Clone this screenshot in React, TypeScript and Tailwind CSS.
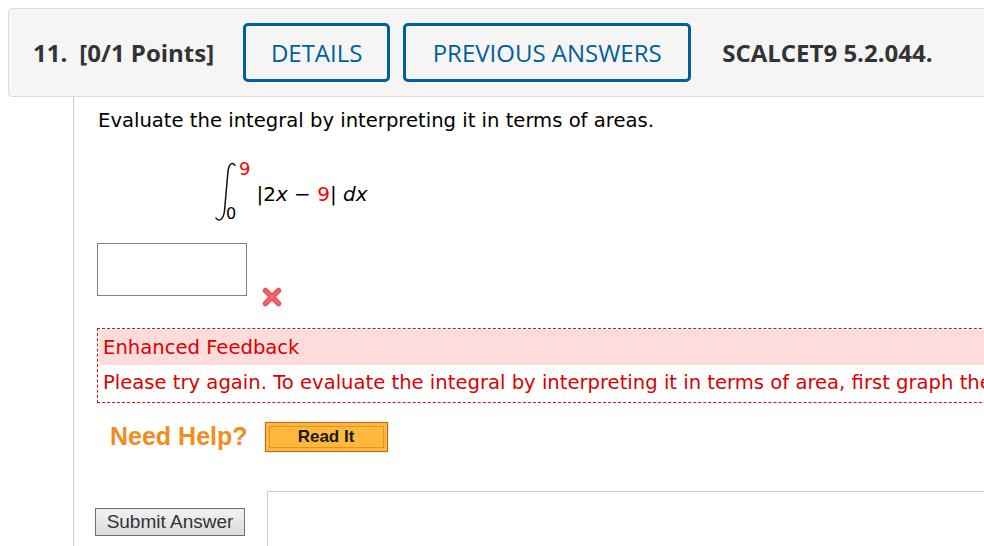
import React from 'react';

const headerFont = { fontFamily: '"Open Sans", "Liberation Sans", sans-serif' };
const verdana = { fontFamily: '"DejaVu Sans", Verdana, sans-serif' };
const arial = { fontFamily: '"Liberation Sans", Arial, sans-serif' };

const IntegralSign: React.FC = () => (
  <svg width="26" height="60" viewBox="0 0 26 60" className="shrink-0">
    <path
      d="M24 3.5 Q22.5 0.8 20.5 1.6 Q18 2.6 17 9 L13.5 49 Q12.6 56 9.5 57.6 Q6.5 58.8 5 56"
      fill="none"
      stroke="#111"
      strokeWidth="1.5"
      strokeLinecap="round"
    />
  </svg>
);

const WrongMark: React.FC = () => (
  <svg width="22" height="22" viewBox="0 0 22 22">
    <path d="M4.5 4.5 L17.5 17.5 M17.5 4.5 L4.5 17.5" stroke="#f0525a" strokeWidth="5.5" strokeLinecap="round" />
    <path d="M4.5 4.5 L17.5 17.5 M17.5 4.5 L4.5 17.5" stroke="#ff7a80" strokeWidth="1.5" strokeLinecap="round" opacity="0.6" />
  </svg>
);

const App: React.FC = () => {
  return (
    <div className="w-[984px] h-[546px] overflow-hidden bg-white">
      {/* Question header */}
      <div
        className="mt-2 ml-2 w-[1010px] h-[89px] bg-[#f5f5f5] border border-[#dcdcdc] rounded flex items-center pl-[24px] text-[#333]"
        style={headerFont}
      >
        <span className="text-[24px] font-bold">11.</span>
        <span className="text-[24px] font-bold ml-[12px]">[0/1 Points]</span>
        <button className="ml-[29px] h-[59px] w-[147px] border-[3px] border-[#00609c] rounded-[5px] text-[24px] text-[#00609c] bg-transparent">
          DETAILS
        </button>
        <button className="ml-[13px] h-[59px] w-[288px] border-[3px] border-[#00609c] rounded-[5px] text-[24px] text-[#00609c] bg-transparent">
          PREVIOUS ANSWERS
        </button>
        <span className="ml-[31px] text-[24px] font-bold">SCALCET9 5.2.044.</span>
      </div>

      {/* Question body */}
      <div className="ml-[73px] border-l border-[#cccccc] h-[460px] pl-[24px] pt-[11px] w-[1000px]">
        <p className="text-[19.6px] text-black leading-[26px]" style={verdana}>
          Evaluate the integral by interpreting it in terms of areas.
        </p>

        <div className="ml-[113px] mt-[28px] flex h-[60px]" style={verdana}>
          <IntegralSign />
          <div className="-ml-[11px] flex flex-col justify-between h-[60px]">
            <span className="text-[18px] leading-[18px] text-[#ff0000] pl-[13px] -mt-[2px]">9</span>
            <span className="text-[16px] leading-[16px] text-black">0</span>
          </div>
          <div className="ml-[6px] mt-[20px] text-[20px] leading-[24px] text-black whitespace-nowrap">
            |2<i>x</i> &minus; <span className="text-[#ff0000]">9</span>| <i>dx</i>
          </div>
        </div>

        <div className="flex mt-[21px] h-[53px]">
          <input
            type="text"
            className="-ml-[1px] w-[150px] h-[53px] border border-[#808080] bg-white outline-none"
          />
          <div className="ml-[14px] mt-[43px]">
            <WrongMark />
          </div>
        </div>

        <div
          className="mt-[32px] -ml-[1px] w-[960px] border border-dashed border-[#ff0000] p-[1px] text-[19.6px] text-[#dd0000] whitespace-nowrap overflow-hidden"
          style={verdana}
        >
          <div className="h-[35px] bg-[#ffdcdc] pl-[4px] leading-[35px]">Enhanced Feedback</div>
          <div className="h-[36px] pl-[4px] leading-[36px]">
            Please try again. To evaluate the integral by interpreting it in terms of area, first graph the
            function and find the areas of the regions above and below the x-axis.
          </div>
        </div>

        <div className="flex items-center mt-[18px] ml-[12px] h-[32px]">
          <span className="text-[25px] font-bold text-[#f28c1e]" style={arial}>
            Need Help?
          </span>
          <button
            className="ml-[17px] w-[123px] h-[30px] bg-[#ffb83c] border border-[#b8702e] p-[3px] shadow-[0_0_1px_#c07a30]"
            style={arial}
          >
            <div className="h-full w-full border border-[#dc962e] flex items-center justify-center text-[17px] font-bold text-[#1a1a1a]">
              Read It
            </div>
          </button>
        </div>

        <div className="flex items-start mt-[38px]">
          <button
            className="mt-[17px] -ml-[3px] w-[150px] h-[28px] border border-[#707070] bg-gradient-to-b from-[#f2f2f2] to-[#dcdcdc] text-[19px] leading-[26px] text-[#333]"
            style={arial}
          >
            Submit Answer
          </button>
          <div className="ml-[22px] h-[80px] w-[800px] border-t border-l border-[#cccccc]" />
        </div>
      </div>
    </div>
  );
};

export default App;
